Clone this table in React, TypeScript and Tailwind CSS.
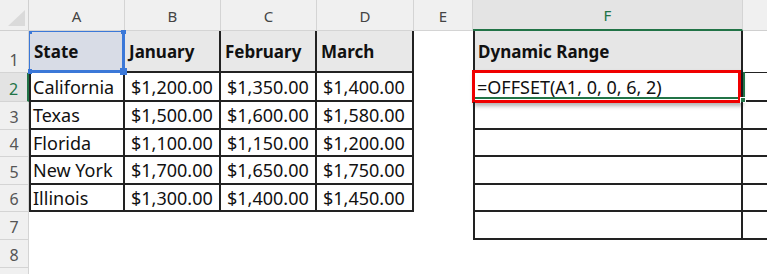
import React from 'react';

const colW = ['w-[96px]', 'w-[96px]', 'w-[96px]', 'w-[97px]', 'w-[59px]', 'w-[270px]'];
const letters = ['A', 'B', 'C', 'D', 'E', 'F'];

const data = [
  ['California', '$1,200.00', '$1,350.00', '$1,400.00'],
  ['Texas', '$1,500.00', '$1,600.00', '$1,580.00'],
  ['Florida', '$1,100.00', '$1,150.00', '$1,200.00'],
  ['New York', '$1,700.00', '$1,650.00', '$1,750.00'],
  ['Illinois', '$1,300.00', '$1,400.00', '$1,450.00'],
];

const rowH = ['h-[29px]', 'h-[28px]', 'h-[27px]', 'h-[28px]', 'h-[27px]', 'h-[28px]', 'h-[28px]', 'h-[20px]'];

const RowHead = ({ n, active }: { n: number; active?: boolean }) => (
  <div
    className={
      active
        ? 'w-[29px] shrink-0 flex items-end justify-center pb-[4px] bg-[#e3e3e3] border-b border-[#d4d4d4] border-r-2 border-r-[#217346] text-[16px] text-[#217346]'
        : 'w-[29px] shrink-0 flex items-end justify-center pb-[4px] bg-[#f0f0f0] border-b border-r border-[#d4d4d4] text-[16px] text-[#555]'
    }
  >
    {n < 9 ? n : null}
  </div>
);

const App = () => {
  return (
    <div className="w-[767px] h-[274px] overflow-hidden bg-white font-['Noto_Sans',sans-serif] text-[#111] leading-none">
      {/* column headers */}
      <div className="flex h-[31px]">
        <div className="w-[29px] shrink-0 relative bg-[#f0f0f0] border-r border-b border-[#d0d0d0]">
          <svg className="absolute left-[8px] top-[10px]" width="17" height="16" viewBox="0 0 17 16">
            <polygon points="0,16 17,0 17,16" fill="#dadada" />
          </svg>
        </div>
        {letters.map((l, i) => (
          <div
            key={l}
            className={
              l === 'F'
                ? `${colW[i]} shrink-0 flex items-end justify-center pb-[6px] bg-[#e4e4e4] border-r border-[#d4d4d4] border-b-2 border-b-[#217346] text-[15px] text-[#217346]`
                : `${colW[i]} shrink-0 flex items-end justify-center pb-[6px] bg-[#f0f0f0] border-r border-b border-[#d4d4d4] text-[15px] text-[#444]`
            }
          >
            {l}
          </div>
        ))}
        <div className="flex-1 bg-[#f0f0f0] border-b border-[#d0d0d0]" />
      </div>

      {/* row 1 */}
      <div className="flex h-[42px]">
        <RowHead n={1} />
        <div className="w-[96px] shrink-0 relative flex items-center pl-[4px] bg-[#d8dce6] border-l border-t border-[#3b78d8] border-r-[3px] border-b-[3px] text-[17px] font-bold">
          State
          <span className="absolute -left-[1px] -top-[1px] w-[3px] h-[3px] bg-[#3b78d8]" />
          <span className="absolute -right-[4px] -top-[2px] w-[5px] h-[4px] bg-[#3b78d8]" />
          <span className="absolute -left-[2px] -bottom-[4px] w-[4px] h-[5px] bg-[#3b78d8]" />
          <span className="absolute -right-[5px] -bottom-[5px] w-[7px] h-[7px] bg-[#3b78d8]" />
        </div>
        {['January', 'February', 'March'].map((h, i) => (
          <div
            key={h}
            className={`${colW[i + 1]} shrink-0 flex items-center pl-[4px] bg-[#e8e8e8] border-r-2 border-b-2 border-[#222] text-[17px] font-bold`}
          >
            {h}
          </div>
        ))}
        <div className="w-[59px] shrink-0" />
        <div className="w-[270px] shrink-0 flex items-center pl-[3px] bg-[#e6e6e6] border-l-2 border-r-2 border-b-2 border-[#222] text-[17px] font-bold">
          Dynamic Range
        </div>
        <div className="flex-1 border-b border-[#222]" />
      </div>

      {/* rows 2-9 */}
      {rowH.map((h, r) => {
        const n = r + 2;
        const vals = data[r];
        return (
          <div key={n} className={`flex ${h}`}>
            <RowHead n={n} active={n === 2} />
            {[0, 1, 2, 3].map((c) => (
              <div
                key={c}
                className={
                  vals
                    ? `${colW[c]} shrink-0 flex items-center ${c === 0 ? 'pl-[2px] border-l-2' : 'pl-[6px]'} border-r-2 border-b-2 border-[#222] text-[18px] whitespace-nowrap`
                    : `${colW[c]} shrink-0`
                }
              >
                {vals ? vals[c] : null}
              </div>
            ))}
            <div className="w-[59px] shrink-0" />
            <div
              className={
                n <= 7
                  ? 'w-[270px] shrink-0 relative flex items-center pl-[2px] border-l-2 border-r-2 border-b-2 border-[#222] text-[18px] whitespace-nowrap'
                  : 'w-[270px] shrink-0'
              }
            >
              {n === 2 && (
                <>
                  =OFFSET(A1, 0, 0, 6, 2)
                  <span className="absolute left-0 right-0 bottom-[1px] h-[2px] bg-[#217346]" />
                  <span className="absolute -left-[3px] -top-[3px] w-[269px] h-[33px] border-[3px] border-[#f00000] shadow-[2px_3px_4px_rgba(0,0,0,0.3)]" />
                  <span className="absolute -right-[4px] -top-[1px] w-[2px] h-[31px] bg-[#217346]" />
                  <span className="absolute -right-[5px] -bottom-[3px] w-[6px] h-[6px] bg-[#217346] border border-white" />
                </>
              )}
            </div>
            <div className={n <= 7 ? 'flex-1 border-b-2 border-[#222]' : 'flex-1'} />
          </div>
        );
      })}
    </div>
  );
};

export default App;
